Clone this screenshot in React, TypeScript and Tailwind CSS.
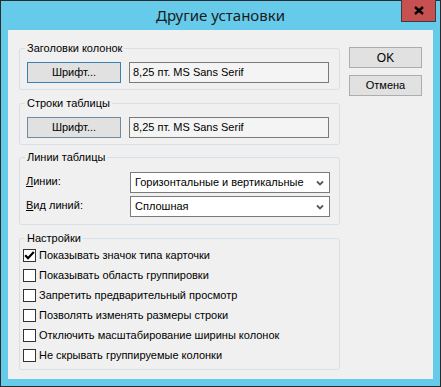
import React from "react";

function Chevron() {
  return (
    <svg width="8" height="6" viewBox="0 0 8 6" className="block">
      <path d="M1 1.5 L4 4.5 L7 1.5" fill="none" stroke="#5a5a5a" strokeWidth="1.8" />
    </svg>
  );
}

function Checkbox({ checked }: { checked?: boolean }) {
  return (
    <div className="w-[13px] h-[13px] border border-[#333333] bg-white flex items-center justify-center shrink-0">
      {checked && (
        <svg width="11" height="11" viewBox="0 0 11 11" className="block">
          <path d="M1.2 5.2 L4 8.2 L9.8 2" fill="none" stroke="#000" strokeWidth="2.2" />
        </svg>
      )}
    </div>
  );
}

function FontGroup({ title, mt, blue }: { title: string; mt: string; blue?: boolean }) {
  return (
    <fieldset className={`${mt} w-[321px] border border-[#d5dfe5] rounded-[3px]`}>
      <legend className="ml-[5px] px-[2px] leading-[13px]">{title}</legend>
      <div className="pl-[7px] pt-[7px] pb-[6px] flex items-center gap-[8px]">
        <div
          className={`w-[94px] h-[21px] bg-[#e1e1e1] border ${blue ? "border-[#3c7fb1]" : "border-[#6f8ba3]"} flex items-center justify-center`}
        >
          Шрифт...
        </div>
        <div className="w-[200px] h-[21px] border border-[#7a7a7a] bg-[#f4f4f4] flex items-center pl-[3px]">
          8,25 пт. MS Sans Serif
        </div>
      </div>
    </fieldset>
  );
}

function SelectRow({ label, value }: { label: React.ReactNode; value: string }) {
  return (
    <div className="flex items-center">
      <div className="w-[104px] leading-[13px] -mt-[2px]">{label}</div>
      <div className="w-[200px] h-[21px] border border-[#7a7a7a] bg-white flex items-center pl-[4px] pr-[5px]">
        <span className="flex-1">{value}</span>
        <Chevron />
      </div>
    </div>
  );
}

const checks = [
  { t: "Показывать значок типа карточки", c: true },
  { t: "Показывать область группировки" },
  { t: "Запретить предварительный просмотр" },
  { t: "Позволять изменять размеры строки" },
  { t: "Отключить масштабирование ширины колонок" },
  { t: "Не скрывать группируемые колонки" },
];

export default function App() {
  return (
    <div className="w-[441px] h-[387px] bg-[#66cbea] border border-[#2b2b2b] flex flex-col font-['Liberation_Sans',Arial,sans-serif] text-[11px] text-black">
      <div className="h-[29px] shrink-0 flex items-center justify-center relative">
        <span className="font-['Noto_Sans',sans-serif] text-[15px] text-[#1a1a1a] -mt-[1px]">Другие установки</span>
        <div className="absolute left-[400px] top-[-1px] w-[35px] h-[22px] bg-[#c75050] border border-t-0 border-[#3c3c3c] flex items-center justify-center">
          <svg width="10" height="9" viewBox="0 0 10 9" className="block -mt-[1px]">
            <path d="M1 1 L9 8 M9 1 L1 8" stroke="#000" strokeWidth="2.4" />
          </svg>
        </div>
      </div>
      <div className="mx-[7px] h-[349px] shrink-0 bg-[#f0f0f0] flex pl-[11px]">
        <div className="w-[321px] pt-[12px] flex flex-col">
          <FontGroup title="Заголовки колонок" mt="" blue />
          <FontGroup title="Строки таблицы" mt="mt-[7px]" />
          <fieldset className="mt-[6px] w-[321px] border border-[#d5dfe5] rounded-[3px]">
            <legend className="ml-[5px] px-[2px] leading-[13px]">Линии таблицы</legend>
            <div className="pl-[6px] pt-[8px] pb-[7px] flex flex-col gap-[3px]">
              <SelectRow label={<><u>Л</u>инии:</>} value="Горизонтальные и вертикальные" />
              <SelectRow label={<><u>В</u>ид линий:</>} value="Сплошная" />
            </div>
          </fieldset>
          <fieldset className="mt-[7px] w-[321px] border border-[#d5dfe5] rounded-[3px]">
            <legend className="ml-[5px] px-[2px] leading-[13px]">Настройки</legend>
            <div className="pl-[3px] pb-[4px] flex flex-col">
              {checks.map((c) => (
                <div key={c.t} className="h-[20px] flex items-center gap-[3px]">
                  <Checkbox checked={c.c} />
                  <span>{c.t}</span>
                </div>
              ))}
            </div>
          </fieldset>
        </div>
        <div className="ml-[9px] pt-[17px] flex flex-col gap-[7px]">
          <div className="w-[73px] h-[21px] bg-[#e1e1e1] border border-[#adadad] flex items-center justify-center text-[12px]">
            OK
          </div>
          <div className="w-[73px] h-[21px] bg-[#e1e1e1] border border-[#adadad] flex items-center justify-center">
            Отмена
          </div>
        </div>
      </div>
    </div>
  );
}
